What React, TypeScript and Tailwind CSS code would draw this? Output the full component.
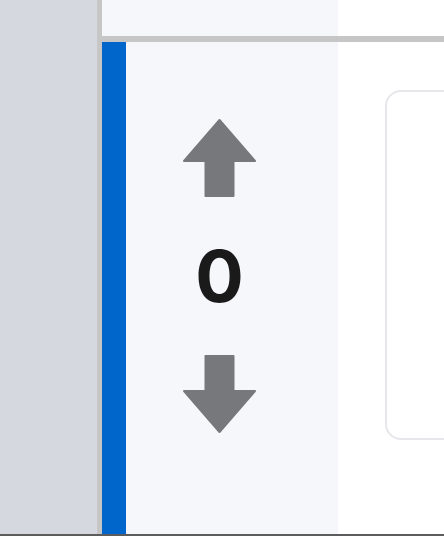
import React from "react";

function Arrow({ down = false }: { down?: boolean }) {
  return (
    <svg
      width="79"
      height="81"
      viewBox="-2 -2 79 81"
      className={down ? "rotate-180" : ""}
    >
      <polygon
        points="37.5,1 73,42 51.5,42 51.5,77 23.5,77 23.5,42 2,42"
        fill="#77787b"
        stroke="#77787b"
        strokeWidth="2"
        strokeLinejoin="round"
      />
    </svg>
  );
}

export default function App() {
  return (
    <div className="flex h-[536px] w-[444px] flex-col overflow-hidden bg-white">
      <div className="flex h-[534px] shrink-0 flex-row">
        <div className="w-[97px] shrink-0 bg-[#d5d9df]" />
        <div className="w-[5px] shrink-0 bg-[#c6c6c6]" />
        <div className="flex min-w-0 flex-1 flex-col">
          <div className="flex h-[36px] shrink-0 flex-row">
            <div className="w-[236px] shrink-0 bg-[#f6f7fa]" />
            <div className="min-w-0 flex-1 bg-white" />
          </div>
          <div className="h-[6px] shrink-0 bg-[#c6c6c6]" />
          <div className="flex min-h-0 flex-1 flex-row">
            <div className="w-[24px] shrink-0 bg-[#0066cc]" />
            <div className="flex w-[212px] shrink-0 flex-col items-start bg-[#f6f7fa] pl-[54px] pt-[75px]">
              <Arrow />
              <div className="mt-[42px] w-[79px] text-center font-['Inter',sans-serif] text-[72px] font-bold leading-[72px] text-[#1a1a1b]">
                0
              </div>
              <div className="mt-[42px]">
                <Arrow down />
              </div>
            </div>
            <div className="min-w-0 flex-1 overflow-hidden bg-white pl-[47px] pt-[48px]">
              <div className="h-[350px] w-[200px] rounded-[16px] border-2 border-[#e6e7ea] bg-white" />
            </div>
          </div>
        </div>
      </div>
      <div className="h-[2px] shrink-0 bg-[#5c5c5c]" />
    </div>
  );
}
